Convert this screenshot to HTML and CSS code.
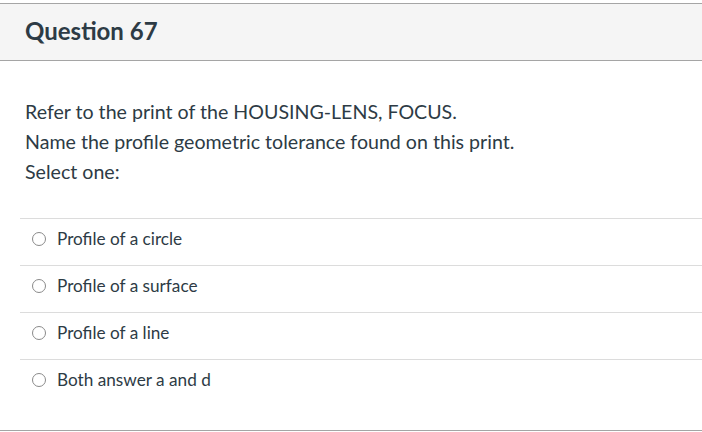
FILE: index.html
```html
<!DOCTYPE html>
<html>
<head>
<meta charset="utf-8">
<link rel="stylesheet" href="styles.css">
</head>
<body>
<div class="question">
  <div class="header"><h2 class="title">Question 67</h2></div>
  <div class="content">
    <div class="text">
      <p>Refer to the print of the HOUSING-LENS, FOCUS.</p>
      <p>Name the profile geometric tolerance found on this print.</p>
      <p>Select one:</p>
    </div>
    <div class="answers">
      <label class="answer"><span class="radio"></span><span>Profile of a circle</span></label>
      <label class="answer"><span class="radio"></span><span>Profile of a surface</span></label>
      <label class="answer"><span class="radio"></span><span>Profile of a line</span></label>
      <label class="answer"><span class="radio"></span><span>Both answer a and d</span></label>
    </div>
  </div>
</div>
</body>
</html>
```
FILE: styles.css
```css
html, body {
  margin: 0;
  padding: 0;
  background: #fff;
}
body {
  font-family: Lato, "Open Sans", sans-serif;
  color: #2d3b45;
  padding-top: 3px;
}
.question {
  border-top: 1px solid #a5a5a5;
  border-bottom: 1px solid #a5a5a5;
}
.header {
  background: #f5f5f5;
  height: 56px;
  border-bottom: 1px solid #a5a5a5;
  display: flex;
  align-items: center;
  padding-left: 25px;
}
.title {
  margin: 0;
  font-size: 24px;
  font-weight: 700;
  line-height: 1;
  padding-bottom: 2px;
}
.content {
  padding: 36px 0 24px 20px;
}
.text {
  padding-left: 5px;
  font-size: 19.6px;
  line-height: 30px;
}
.text p {
  margin: 0;
}
.answers {
  margin-top: 31px;
}
.answer {
  display: flex;
  align-items: center;
  height: 39px;
  padding-bottom: 7px;
  border-top: 1px solid #dcdcdc;
  font-size: 17.2px;
  padding-left: 12px;
  gap: 11px;
}
.radio {
  width: 12px;
  height: 12px;
  border: 1px solid #8a8a8a;
  border-radius: 50%;
  background: #fff;
  flex: none;
}
```
